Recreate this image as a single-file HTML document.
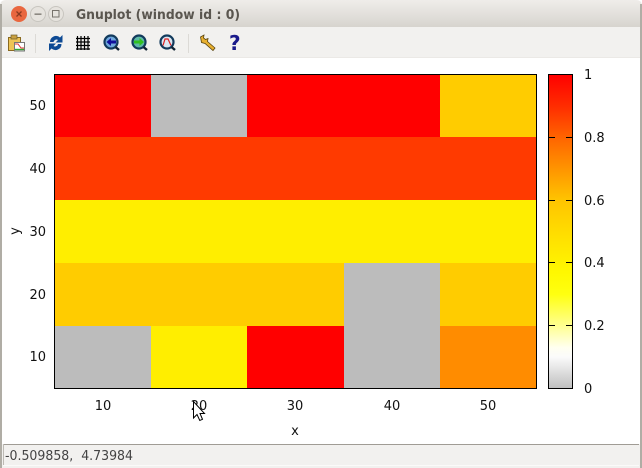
<!DOCTYPE html>
<html><head><meta charset="utf-8"><style>
html,body{margin:0;padding:0;width:642px;height:468px;overflow:hidden;background:#fff}
svg{display:block}
text{font-family:"DejaVu Sans","Liberation Sans",sans-serif;font-size:13px;fill:#111}
</style></head><body>
<svg width="642" height="468" viewBox="0 0 642 468" xmlns="http://www.w3.org/2000/svg">
<defs>
<linearGradient id="tb" x1="0" y1="0" x2="0" y2="1"><stop offset="0" stop-color="#efedea"/><stop offset="1" stop-color="#d6d3cd"/></linearGradient>
<linearGradient id="cb" x1="0" y1="1" x2="0" y2="0">
<stop offset="0" stop-color="#bebebe"/>
<stop offset="0.1" stop-color="#fbfbfb"/>
<stop offset="0.13" stop-color="#fffff0"/>
<stop offset="0.2" stop-color="#ffff90"/>
<stop offset="0.3" stop-color="#ffff10"/>
<stop offset="0.37" stop-color="#fff800"/>
<stop offset="0.5" stop-color="#ffdc00"/>
<stop offset="0.6" stop-color="#ffc400"/>
<stop offset="0.7" stop-color="#ff9400"/>
<stop offset="0.8" stop-color="#ff6400"/>
<stop offset="0.9" stop-color="#ff2c00"/>
<stop offset="1" stop-color="#ff0000"/>
</linearGradient>
</defs>
<!-- window chrome -->
<rect width="642" height="468" fill="#fff"/>
<path d="M0 28V6Q0 0 6 0H636Q642 0 642 6V28Z" fill="url(#tb)"/>
<rect x="0" y="27" width="642" height="31" fill="#f2f1ef"/>
<rect x="0" y="57" width="642" height="1" fill="#ebe9e6"/>
<rect x="0" y="4" width="2" height="464" fill="#b0ada5"/>
<rect x="640" y="4" width="2" height="464" fill="#b0ada5"/>
<!-- window buttons -->
<circle cx="19" cy="14" r="8" fill="#e9673f"/>
<path d="M16.500 11.500L21.500 16.500M21.500 11.500L16.500 16.500" stroke="#8a3a20" stroke-width="1.300"/>
<circle cx="38" cy="14" r="7.500" fill="#e6e3de" stroke="#c8c5bf"/>
<rect x="34.500" y="13.500" width="7" height="1.300" fill="#77736c"/>
<circle cx="56" cy="14" r="7.500" fill="#e6e3de" stroke="#c8c5bf"/>
<rect x="52.500" y="10.500" width="6.500" height="6.500" fill="none" stroke="#77736c"/>
<text x="76" y="19" style="font-family:'DejaVu Sans',sans-serif;font-size:13px;font-weight:bold;fill:#5a564f" textLength="164" lengthAdjust="spacingAndGlyphs">Gnuplot (window id : 0)</text>
<!-- toolbar icons -->
<rect x="8.500" y="37.500" width="12" height="13" fill="#eec455" stroke="#8a6a20"/>
<rect x="11" y="35" width="6" height="4" fill="#c9a040" stroke="#6a5a30" stroke-width=".7"/>
<rect x="14.500" y="42.500" width="10" height="8.500" fill="#fff" stroke="#777"/>
<path d="M15 44L18 44L21 48L24 48" stroke="#d33" fill="none"/>
<path d="M15 49.500L24 49.500" stroke="#3a3" stroke-width="1.400"/>
<rect x="35" y="34" width="1" height="19" fill="#dcdad6"/>
<path d="M50 42A6 6 0 0 1 60 37.500L62.500 35V42.500H55.500L58 40A3 3 0 0 0 53.500 42Z" fill="#0e4a94"/>
<path d="M61.500 44A6 6 0 0 1 51.500 48.500L49 51V43.500H56L53.500 46A3 3 0 0 0 58 44Z" fill="#0e4a94"/>
<path d="M77.500 36V50M81 36V50M84.500 36V50M88 36V50M76 38.500H90M76 42H90M76 45.500H90M76 49H90" stroke="#000" stroke-width="1.200" fill="none"/>
<circle cx="111" cy="42" r="6.500" fill="#6fa8dc" stroke="#123a5c" stroke-width="2.200"/>
<path d="M106.500 42L111 38V40.500H116V43.500H111V46Z" fill="#10109a"/>
<path d="M115.500 47L119 50" stroke="#123" stroke-width="2.400"/>
<circle cx="139" cy="42" r="6.500" fill="#5fb8a8" stroke="#123a5c" stroke-width="2.200"/>
<path d="M144 42L139.500 38V40.500H134V43.500H139.500V46Z" fill="#30c020"/>
<path d="M143.500 47L147 50" stroke="#123" stroke-width="2.400"/>
<circle cx="167" cy="42" r="6.500" fill="#dbe8f4" stroke="#123a5c" stroke-width="2.200"/>
<path d="M163 45.500L165 39L168 39L171 45.500" stroke="#d22" fill="none" stroke-width="1.200"/>
<path d="M171.500 47L175 50" stroke="#123" stroke-width="2.400"/>
<rect x="188" y="34" width="1" height="19" fill="#dcdad6"/>
<path d="M200.500 37L204 35L203.500 38L205.500 39.500L208 38.500L207.500 41.500L215 48L213 50.500L205 43.500L201.500 42.500Z" fill="#e8b030" stroke="#5a4510" stroke-width=".8"/>
<text x="229" y="50" style="font-family:'DejaVu Sans',sans-serif;font-size:20px;font-weight:bold;fill:#1a1a8a">?</text>
<!-- heat map cells -->
<rect x="54" y="74" width="97" height="63" fill="#ff0000"/>
<rect x="151" y="74" width="96" height="63" fill="#bcbcbc"/>
<rect x="247" y="74" width="193" height="63" fill="#ff0000"/>
<rect x="440" y="74" width="96" height="63" fill="#ffcc00"/>
<rect x="54" y="137" width="482" height="63" fill="#ff3a00"/>
<rect x="54" y="200" width="482" height="63" fill="#ffee00"/>
<rect x="54" y="263" width="290" height="63" fill="#ffcc00"/>
<rect x="344" y="263" width="96" height="63" fill="#bcbcbc"/>
<rect x="440" y="263" width="96" height="63" fill="#ffcc00"/>
<rect x="54" y="326" width="97" height="62" fill="#bcbcbc"/>
<rect x="151" y="326" width="96" height="62" fill="#ffee00"/>
<rect x="247" y="326" width="97" height="62" fill="#ff0000"/>
<rect x="344" y="326" width="96" height="62" fill="#bcbcbc"/>
<rect x="440" y="326" width="96" height="62" fill="#ff8c00"/>
<rect x="54.500" y="74.500" width="482" height="314" fill="none" stroke="#000"/>
<!-- colorbar -->
<rect x="548.500" y="74.500" width="24" height="314" fill="url(#cb)" stroke="#000"/>
<path d="M549 137.500h6M566 137.500h6M549 200.500h6M566 200.500h6M549 262.500h6M566 262.500h6M549 325.500h6M566 325.500h6" stroke="#000" fill="none"/>
<!-- labels -->
<g text-anchor="end">
<text x="46" y="110">50</text><text x="46" y="173">40</text><text x="46" y="236">30</text><text x="46" y="299">20</text><text x="46" y="361">10</text>
</g>
<g text-anchor="middle">
<text x="103" y="410">10</text><text x="199" y="410">20</text><text x="295" y="410">30</text><text x="392" y="410">40</text><text x="488" y="410">50</text>
<text x="295" y="435">x</text>
</g>
<text transform="translate(19 231) rotate(-90)" text-anchor="middle">y</text>
<text x="584" y="79">1</text><text x="584" y="142">0.8</text><text x="584" y="205">0.6</text><text x="584" y="267">0.4</text><text x="584" y="330">0.2</text><text x="584" y="393">0</text>
<!-- cursor -->
<path d="M193.500 401.500V418L197 414.500L199.800 420.500L202.500 419.300L200 413.500H204.500Z" fill="#fff" stroke="#000"/>
<!-- status bar -->
<rect x="2" y="444" width="638" height="24" fill="#f2f1ef"/>
<rect x="3" y="444" width="636" height="1" fill="#a09c95"/>
<rect x="3" y="444" width="1" height="21" fill="#bdbab4"/>
<rect x="3" y="465" width="636" height="1" fill="#fbfaf9"/>
<text x="5" y="460" xml:space="preserve" style="fill:#444;white-space:pre" textLength="128" lengthAdjust="spacingAndGlyphs">-0.509858,  4.73984</text>
</svg>
</body></html>
